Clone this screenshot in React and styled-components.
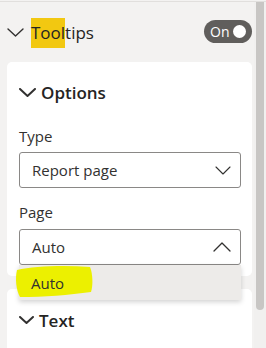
import React from "react";
import styled, { createGlobalStyle } from "styled-components";

const GlobalStyle = createGlobalStyle`
  html, body {
    margin: 0;
    padding: 0;
    background: #f3f2f1;
    font-family: "Open Sans", "Noto Sans", sans-serif;
    color: #252423;
    overflow: hidden;
  }
`;

const Page = styled.div`
  display: flex;
  width: 266px;
  height: 347px;
  border-top: 1px solid #e1dfdd;
  margin-top: 1px;
  box-sizing: border-box;
  overflow: hidden;
`;

const Pane = styled.div`
  flex: 1;
  padding: 0 2px 0 7px;
  display: flex;
  flex-direction: column;

  & > * {
    flex-shrink: 0;
  }
`;

const ScrollTrack = styled.div`
  width: 12px;
  padding: 0 2px;
  box-sizing: border-box;
  background: #f1f0ef;
`;

const Thumb = styled.div`
  height: 308px;
  border-radius: 0 0 4px 4px;
  background: #c8c6c4;
`;

const Header = styled.div`
  display: flex;
  align-items: center;
  height: 60px;
`;

const Title = styled.span`
  font-size: 17px;
  margin-left: 7px;
  flex: 1;
`;

const Mark = styled.span`
  background: #f2c811;
  padding: 3px 0 4px;
`;

const Toggle = styled.div`
  width: 48px;
  height: 23px;
  border-radius: 12px;
  background: #605e5c;
  display: flex;
  align-items: center;
  color: #fff;
  font-size: 14px;
  box-sizing: border-box;
  padding: 0 6px 0 6px;
  justify-content: space-between;
  margin-bottom: 2px;
`;

const Knob = styled.span`
  width: 13px;
  height: 13px;
  border-radius: 50%;
  background: #fff;
`;

const Card = styled.div`
  position: relative;
  background: #fff;
  border-radius: 5px;
  padding: ${(p) => p.$pad};
  margin-bottom: ${(p) => p.$mb || 0}px;
`;

const SectionRow = styled.div`
  display: flex;
  align-items: center;
  gap: 5px;
  font-size: 17px;
  font-weight: 600;
  height: 30px;
`;

const Label = styled.div`
  font-size: 15px;
  margin: ${(p) => p.$m};
  line-height: 20px;
  color: #323130;
`;

const SelectWrap = styled.div`
  position: relative;
  width: 222px;
`;

const Select = styled.div`
  height: 36px;
  box-sizing: border-box;
  border: 1px solid #8a8886;
  border-radius: 3px;
  display: flex;
  align-items: center;
  justify-content: space-between;
  padding: 0 9px 0 12px;
  font-size: 15px;
  color: #323130;
`;

const Menu = styled.div`
  position: absolute;
  left: 0;
  right: 0;
  top: 36px;
  height: 35px;
  background: #edebe9;
  box-shadow: 0 2px 5px rgba(0, 0, 0, 0.18);
  display: flex;
  align-items: center;
  padding-left: 12px;
  font-size: 15px;
  z-index: 2;
`;

const MarkerText = styled.span`
  position: relative;
  display: inline-block;
  color: #323130;
  z-index: 0;
`;

const Marker = styled.svg`
  position: absolute;
  left: -17px;
  top: -9px;
  z-index: -1;
`;

const Chevron = ({ up, w = 17, h = 9, sw = 1.4 }) => (
  <svg width={w} height={h} viewBox={`0 0 ${w} ${h}`} fill="none">
    <path
      d={up ? `M1 ${h - 1} L${w / 2} 1 L${w - 1} ${h - 1}` : `M1 1 L${w / 2} ${h - 1} L${w - 1} 1`}
      stroke="#323130"
      strokeWidth={sw}
      strokeLinecap="round"
      strokeLinejoin="round"
    />
  </svg>
);

export default function App() {
  return (
    <>
      <GlobalStyle />
      <Page>
        <Pane>
          <Header>
            <Chevron w={17} h={9} sw={1.4} />
            <Title>
              <Mark>Tool</Mark>tips
            </Title>
            <Toggle>
              On
              <Knob />
            </Toggle>
          </Header>
          <Card $pad="15px 0 11px 12px" $mb={13}>
            <SectionRow>
              <Chevron w={17} h={9} sw={2} />
              Options
            </SectionRow>
            <Label $m="19px 0 6px">Type</Label>
            <SelectWrap>
              <Select>
                Report page
                <Chevron w={16} h={9} sw={1.1} />
              </Select>
            </SelectWrap>
            <Label $m="14px 0 7px">Page</Label>
            <SelectWrap>
              <Select>
                Auto
                <Chevron up w={18} h={10} sw={1.3} />
              </Select>
              <Menu>
                <MarkerText>
                  <Marker width="80" height="34" viewBox="0 0 80 34">
                    <path
                      d="M3 6 C20 2 50 1 76 3 C79 10 79 22 77 28 C55 31 30 33 6 33 C2 26 1 14 3 6 Z"
                      fill="#ecf000"
                    />
                  </Marker>
                  Auto
                </MarkerText>
              </Menu>
            </SelectWrap>
          </Card>
          <Card $pad="16px 0 20px 12px">
            <SectionRow>
              <Chevron w={15} h={8} sw={2} />
              Text
            </SectionRow>
          </Card>
        </Pane>
        <ScrollTrack>
          <Thumb />
        </ScrollTrack>
      </Page>
    </>
  );
}
